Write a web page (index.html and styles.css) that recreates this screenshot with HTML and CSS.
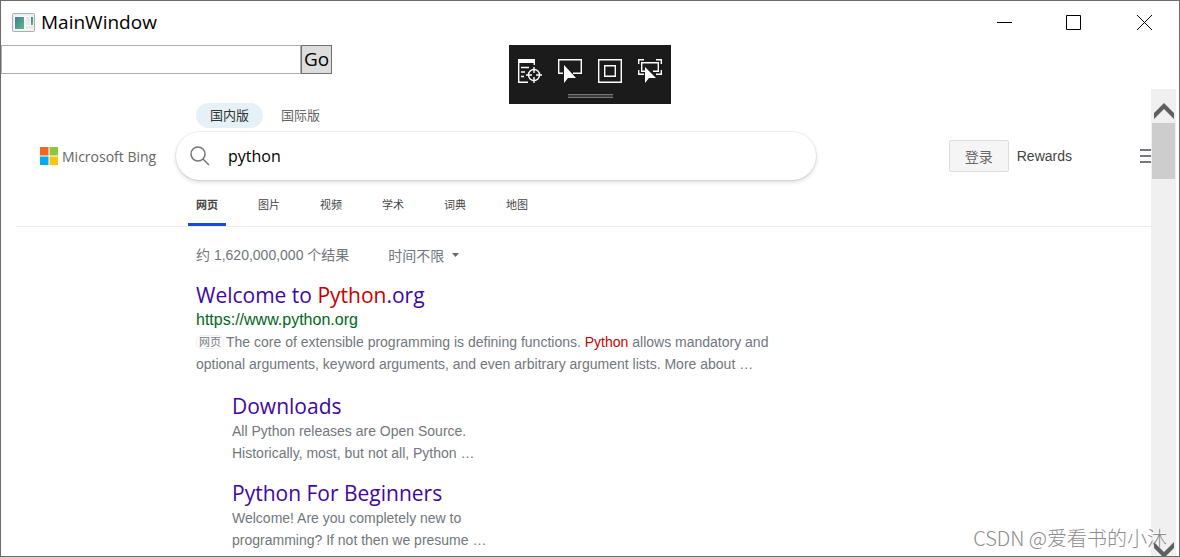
FILE: index.html
```html
<!DOCTYPE html>
<html lang="zh-CN">
<head>
  <meta charset="UTF-8">
  <title>MainWindow</title>
  <meta name="viewport" content="width=device-width, initial-scale=1.0">
  <link rel="stylesheet" href="styles.css">
</head>
<body>
  <div class="window">
    <header class="titlebar">
      <svg class="app-icon" width="23" height="19" viewBox="0 0 23 19">
        <defs>
          <linearGradient id="pane" x1="0" y1="0" x2="1" y2="1">
            <stop offset="0" stop-color="#3a7f9c"/>
            <stop offset="1" stop-color="#62b87c"/>
          </linearGradient>
        </defs>
        <rect x="0.5" y="0.5" width="22" height="18" rx="1" fill="#eceef0" stroke="#a9aeb3"/>
        <rect x="2" y="3" width="19" height="14" fill="#fafafa"/>
        <rect x="3" y="4" width="9" height="12" fill="url(#pane)"/>
        <rect x="14" y="4" width="4" height="8" fill="#e9e9ea"/>
        <rect x="19" y="4" width="2" height="8" fill="url(#pane)"/>
        <rect x="14" y="13" width="7" height="3" fill="#e9e9ea"/>
      </svg>
      <h1>MainWindow</h1>
      <div class="window-buttons">
        <button type="button" aria-label="Minimize">
          <svg width="16" height="16" viewBox="0 0 16 16"><path d="M1 8.500h15"/></svg>
        </button>
        <button type="button" aria-label="Maximize">
          <svg width="16" height="16" viewBox="0 0 16 16"><path d="M.5 1.500h14v14H.5z"/></svg>
        </button>
        <button type="button" aria-label="Close">
          <svg width="16" height="16" viewBox="0 0 16 16"><path d="M1 1l15 15M16 1L1 16"/></svg>
        </button>
      </div>
    </header>

    <form class="address-bar">
      <input type="text" aria-label="Address">
      <button type="button">Go</button>
    </form>

    <div class="browser">
      <div class="page">
        <div class="versions">
          <a class="active" href="#">国内版</a>
          <a href="#">国际版</a>
        </div>

        <div class="search-row">
          <a class="logo" href="#">
            <svg width="18" height="18" viewBox="0 0 18 18">
              <path fill="#f26522" d="M0 0h8.500v8.500H0z"/>
              <path fill="#8dc63f" d="M9.500 0H18v8.500H9.500z"/>
              <path fill="#00aeef" d="M0 9.500h8.500V18H0z"/>
              <path fill="#ffc20e" d="M9.500 9.500H18V18H9.500z"/>
            </svg>
            <span>Microsoft Bing</span>
          </a>
          <form class="search">
            <svg width="20" height="20" viewBox="0 0 20 20">
              <circle cx="8" cy="8" r="7"/>
              <path d="M13 13l6 6"/>
            </svg>
            <input type="text" value="python" aria-label="Search">
          </form>
          <div class="account">
            <button class="login" type="button">登录</button>
            <a href="#">Rewards</a>
            <button class="menu" type="button" aria-label="Menu">
              <svg width="20" height="14" viewBox="0 0 20 14"><path d="M0 1h20M0 7h20M0 13h20"/></svg>
            </button>
          </div>
        </div>

        <nav class="tabs">
          <a class="active" href="#">网页</a>
          <a href="#">图片</a>
          <a href="#">视频</a>
          <a href="#">学术</a>
          <a href="#">词典</a>
          <a href="#">地图</a>
        </nav>

        <main>
          <div class="stats">
            <span>约 1,620,000,000 个结果</span>
            <button type="button">时间不限
              <svg width="7" height="4" viewBox="0 0 7 4"><path d="M0 0h7L3.500 4z"/></svg>
            </button>
          </div>

          <article class="result">
            <h2><a href="#">Welcome to <b>Python</b>.org</a></h2>
            <cite>https://www.python.org</cite>
            <p><span class="tag">网页</span>The core of extensible programming is defining functions. <b>Python</b> allows mandatory and optional arguments, keyword arguments, and even arbitrary argument lists. More about …</p>

            <ul class="deep-links">
              <li>
                <h3><a href="#">Downloads</a></h3>
                <p>All Python releases are Open Source. Historically, most, but not all, Python …</p>
              </li>
              <li>
                <h3><a href="#">Python For Beginners</a></h3>
                <p>Welcome! Are you completely new to programming? If not then we presume …</p>
              </li>
            </ul>
          </article>
        </main>
      </div>

      <div class="scrollbar">
        <button type="button" aria-label="Scroll up">
          <svg width="20" height="16" viewBox="0 0 20 16"><path d="M0 10L10 0l10 10v6L10 6 0 16z"/></svg>
        </button>
        <div class="thumb"></div>
        <button class="down" type="button" aria-label="Scroll down">
          <svg width="20" height="16" viewBox="0 0 20 16"><path d="M0 8l10 10L20 8V2L10 12 0 2z"/></svg>
        </button>
      </div>
    </div>

    <!-- XAML debug toolbar -->
    <div class="debug-toolbar">
      <div class="tools">
        <button type="button" aria-label="Go to live visual tree">
          <svg width="24" height="24" viewBox="0 0 24 24">
            <path class="fill" d="M0 0h17v4H0z"/>
            <path d="M.7 0v23.300H10M16.300 0v6M3 8.500h8M3 13h4M3 17.500h3"/>
            <circle cx="16" cy="16" r="5.500"/>
            <path d="M16 8v6M16 18v6M8 16h6M18 16h6"/>
          </svg>
        </button>
        <button type="button" aria-label="Select element">
          <svg width="24" height="24" viewBox="0 0 24 24">
            <path d="M5 14.300H.7V.7h22.600v13.600H15"/>
            <path class="fill" d="M6 6v18l4-5h8z"/>
          </svg>
        </button>
        <button type="button" aria-label="Display layout adorners">
          <svg width="24" height="24" viewBox="0 0 24 24">
            <path d="M.7.7h22.600v22.600H.7zM6.700 6.700h10.600v10.600H6.700z"/>
          </svg>
        </button>
        <button type="button" aria-label="Track focused element">
          <svg width="24" height="24" viewBox="0 0 24 24">
            <path d="M.7 5V.7H6M18 .7h5.300V5M.7 11v4.300H6M23.300 11v4.300H18M7 12.300H3.700V3.700h16.600v8.600H15"/>
            <path class="fill" d="M7 8v16l4-5h7z"/>
          </svg>
        </button>
      </div>
      <div class="grip"></div>
    </div>

    <div class="watermark">CSDN @爱看书的小沐</div>
  </div>
</body>
</html>
```

FILE: styles.css
```css
:root {
  --ui: "Open Sans", "Noto Sans CJK SC", sans-serif;
  --text: "Liberation Sans", "Noto Sans CJK SC", sans-serif;
  --link: #4007a2;
  --match: #c80000;
  --muted: #71777d;
}

* {
  box-sizing: border-box;
}

body {
  margin: 0;
  font-family: var(--text);
}

h1, h2, h3, p, ul {
  margin: 0;
  padding: 0;
  font-weight: normal;
}

a {
  color: inherit;
  text-decoration: none;
}

b {
  font-weight: normal;
  color: var(--match);
}

button {
  padding: 0;
  border: none;
  background: none;
  font-family: inherit;
  color: inherit;
}

svg {
  display: block;
  flex: none;
}

.window {
  position: relative;
  display: flex;
  flex-direction: column;
  height: 100vh;
  border: 1px solid #6b6b6e;
  background: #fff;
  overflow: hidden;
}

/* title bar */
.titlebar {
  display: flex;
  align-items: center;
  height: 42px;
  margin-bottom: 2px;
  flex: none;
  padding-left: 11px;
}

.titlebar h1 {
  margin-left: 6px;
  font-family: var(--ui);
  font-size: 19px;
}

.window-buttons {
  display: flex;
  margin-left: auto;
}

.window-buttons button {
  display: flex;
  align-items: center;
  justify-content: center;
  width: 70px;
  height: 42px;
}

.window-buttons path {
  fill: none;
  stroke: #000;
}

.address-bar {
  display: flex;
  flex: none;
  height: 29px;
  margin-bottom: 15px;
}

.address-bar input {
  width: 300px;
  border: 1px solid #abadb3;
  font-size: 18px;
}

.address-bar button {
  width: 31px;
  padding-bottom: 2px;
  border: 1px solid #707070;
  background: #ddd;
  font-family: var(--ui);
  font-size: 19px;
  line-height: 24px;
}

/* embedded browser */
.browser {
  display: flex;
  flex: 1;
  min-height: 0;
  padding-right: 3px;
}

.page {
  flex: 1;
  min-width: 0;
  padding: 14px 0 0 15px;
  overflow: hidden;
}

.versions {
  display: flex;
  gap: 4px;
  padding-left: 180px;
  margin-bottom: 4px;
  font-size: 13px;
  line-height: 25px;
  color: #666;
}

.versions a {
  padding: 0 14px;
  border-radius: 13px;
}

.versions .active {
  background: #e5f1f6;
  color: #333;
}

.search-row {
  display: flex;
  align-items: center;
}

.logo {
  display: flex;
  align-items: center;
  gap: 4px;
  width: 160px;
  padding-left: 24px;
  font-family: var(--ui);
  font-size: 14px;
  font-weight: 500;
  color: #666;
  white-space: nowrap;
}

.search {
  display: flex;
  align-items: center;
  gap: 16px;
  width: 640px;
  height: 48px;
  padding: 0 14px;
  border-radius: 24px;
  box-shadow: 0 0 0 1px rgba(0, 0, 0, 0.05), 0 2px 4px rgba(0, 0, 0, 0.16);
}

.search svg {
  fill: none;
  stroke: #767676;
  stroke-width: 1.5;
}

.search input {
  flex: 1;
  border: none;
  outline: none;
  background: none;
  font-family: var(--ui);
  font-size: 16px;
}

.account {
  display: flex;
  align-items: center;
  gap: 8px;
  margin-left: auto;
  font-size: 14px;
  color: #444;
}

.login {
  width: 60px;
  height: 32px;
  border: 1px solid #ddd;
  border-radius: 2px;
  background: #f5f5f5;
  font-size: 14px;
  color: #666;
}

.menu {
  width: 11px;
  margin-left: 60px;
}

.menu path {
  stroke: #767680;
  stroke-width: 2;
}

.tabs {
  display: flex;
  gap: 24px;
  height: 47px;
  padding-left: 172px;
  border-bottom: 1px solid #ececec;
  font-size: 11px;
  line-height: 50px;
  color: #444;
}

.tabs a {
  height: 46px;
  padding: 0 8px;
}

.tabs .active {
  border-bottom: 3px solid #174ae4;
  font-weight: bold;
}

/* results */
main {
  padding: 17px 0 0 180px;
  font-size: 14px;
  line-height: 22px;
  color: var(--muted);
}

.stats {
  display: flex;
  gap: 39px;
  margin-bottom: 15px;
}

.stats button {
  display: flex;
  align-items: center;
  gap: 8px;
  font-size: 14px;
}

.stats path {
  fill: #666;
}

.result {
  max-width: 608px;
}

.result h2, .result h3 {
  font-family: var(--ui);
  font-size: 21px;
  line-height: 28px;
  color: var(--link);
}

.result cite {
  display: block;
  font-size: 16px;
  font-style: normal;
  color: #006621;
}

.tag {
  display: inline-block;
  margin-right: 2px;
  padding: 0 2px;
  border: 1px solid #eee;
  border-radius: 6px;
  font-size: 11px;
  line-height: 12px;
  vertical-align: 1px;
}

.deep-links {
  padding: 17px 0 0 36px;
  list-style: none;
}

.deep-links li {
  max-width: 264px;
  margin-bottom: 15px;
}

.scrollbar {
  display: flex;
  flex-direction: column;
  align-items: center;
  width: 25px;
  padding-top: 10px;
  background: #f0f0f0;
}

.scrollbar path {
  fill: #606060;
}

.scrollbar button {
  height: 24px;
}

.scrollbar .down {
  height: 16px;
  margin-top: auto;
}

.thumb {
  width: 23px;
  height: 56px;
  background: #cdcdcd;
}

.debug-toolbar {
  position: absolute;
  top: 44px;
  left: 50%;
  width: 162px;
  margin-left: -81px;
  padding: 14px 9px 6px;
  background: #1b1b1b;
}

.tools {
  display: flex;
  justify-content: space-between;
}

.tools path, .tools circle {
  fill: none;
  stroke: #fff;
  stroke-width: 1.4;
}

.tools .fill {
  fill: #fff;
  stroke: none;
}

.grip {
  width: 45px;
  height: 4px;
  margin: 11px auto 0;
  border: 1px solid #777;
  border-width: 1px 0;
  background: #3a3a3a;
}

.watermark {
  position: absolute;
  right: 12px;
  bottom: 4px;
  font-family: "Noto Sans CJK SC", sans-serif;
  font-size: 20px;
  font-weight: 300;
  line-height: 28px;
  color: #8c8c8c;
  text-shadow: -1px -1px 0 #fff;
}
```
